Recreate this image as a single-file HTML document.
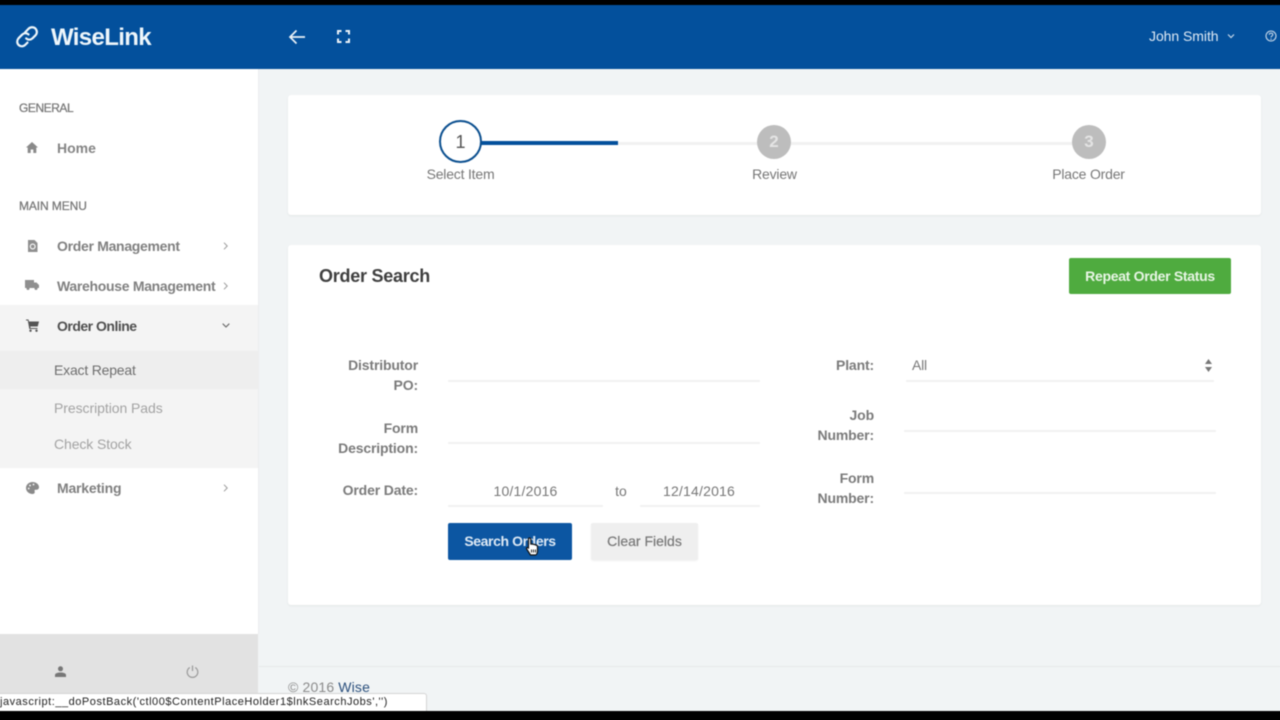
<!DOCTYPE html>
<html><head><meta charset="utf-8"><style>
html,body{margin:0;padding:0;width:1280px;height:720px;overflow:hidden;background:#f1f4f5;font-family:"Liberation Sans",sans-serif}
#o{position:relative;width:1280px;height:720px;overflow:hidden;contain:paint}
#w{position:absolute;left:0;top:0;width:1280px;height:720px;background:#f1f4f5;filter:blur(.4px)}
.a{position:absolute}
.t{position:absolute;white-space:nowrap;line-height:20px;font-size:14px;color:#777}
.r{text-align:right}
.c{text-align:center}
.m{font-size:14px;font-weight:700;color:#808080;letter-spacing:-.3px}
.l{position:absolute;height:2px;background:#f2f2f2}
.lab{font-weight:700;color:#7b7b7b;font-size:14px;letter-spacing:-.15px}
svg{position:absolute;overflow:visible}
</style></head><body><div id="o"><div id="w">
<div class="a" style="left:-6px;top:69px;width:264px;height:642px;background:#fff"></div>
<div class="a" style="left:258px;top:69px;width:1px;height:565px;background:#eceeef"></div>
<div class="a" style="left:-6px;top:-6px;width:1292px;height:11px;background:#000"></div>
<div class="a" style="left:-6px;top:5px;width:1292px;height:64px;background:#03509c"></div>

<svg style="left:15px;top:25px" width="24" height="24" viewBox="0 0 24 24" fill="none" stroke="#eef6fb" stroke-width="2.2" stroke-linecap="round"><path d="M10 7.500 L13.500 3.800 C15.500 1.800 18.500 1.800 20.500 3.600 C22.300 5.600 22.300 8.400 20.500 10.300 L17.500 13.300 C15.600 15 13 15 11.200 13.400"/><path d="M13.500 9.400 C11.500 7.800 9 7.900 7.200 9.600 L3.500 13.300 C1.800 15.300 1.800 18.200 3.600 20 C5.600 21.800 8.400 21.700 10.200 19.900 L12.500 17.600"/></svg>
<div class="t" style="left:51px;top:23px;line-height:30px;font-size:24px;font-weight:700;color:#eef6fb;letter-spacing:-.65px">WiseLink</div>
<svg style="left:288px;top:29px" width="18" height="16" viewBox="0 0 18 16" fill="none" stroke="#eaf1f7" stroke-width="1.7"><path d="M17 8H2M8.500 1.500L2 8l6.500 6.500"/></svg>
<svg style="left:337px;top:30px" width="13" height="13" viewBox="0 0 13 13" fill="none" stroke="#eaf1f7" stroke-width="2"><path d="M1 4.500V1H4.500M8.500 1H12V4.500M12 8.500V12H8.500M4.500 12H1V8.500"/></svg>
<div class="t" style="left:1149px;top:26px;color:#dfeaf5;letter-spacing:-.05px">John Smith</div>
<svg style="left:1227px;top:33px" width="8" height="6" viewBox="0 0 8 6" fill="none" stroke="#c8d9ea" stroke-width="1.200"><path d="M1 1.500L4 4.500L7 1.500"/></svg>
<svg style="left:1265px;top:30px" width="12" height="12" viewBox="0 0 12 12" fill="none" stroke="#c8d9ea" stroke-width="1.100"><circle cx="6" cy="6" r="5"/><path d="M4.300 4.700C4.300 2.600 7.800 2.600 7.800 4.700C7.800 6 6 5.900 6 7.500M6 8.500V9.700"/></svg>

<div class="t" style="left:19px;top:98px;font-size:12px;color:#777;letter-spacing:-.45px;-webkit-text-stroke:.25px #777">GENERAL</div>
<svg style="left:26px;top:142px" width="12" height="11" viewBox="0 0 12 11" fill="#8a8a8a"><path d="M6 0L12 5.500H10.300V11H7.300V7.500H4.700V11H1.700V5.500H0Z"/></svg>
<div class="t m" style="left:57px;top:138px;color:#858585;letter-spacing:0">Home</div>
<div class="t" style="left:19px;top:196px;font-size:12px;color:#777;letter-spacing:-.1px;-webkit-text-stroke:.25px #777">MAIN MENU</div>

<svg style="left:27px;top:240px" width="11" height="12" viewBox="0 0 11 12"><path d="M1 0H7.500L10.500 3V12H1Z" fill="#8f8f8f"/><circle cx="5.700" cy="6.500" r="2.400" fill="none" stroke="#fff" stroke-width="1.100"/></svg>
<div class="t m" style="left:57px;top:236px">Order Management</div>
<svg style="left:223px;top:242px" width="5" height="8" viewBox="0 0 5 8" fill="none" stroke="#9a9a9a" stroke-width="1"><path d="M1 .7L4.200 4L1 7.300"/></svg>

<svg style="left:25px;top:280px" width="14" height="10" viewBox="0 0 14 10" fill="#8f8f8f"><path d="M0 0H9V2.500H11.500L14 5V8H0Z"/><circle cx="3" cy="8.500" r="1.500"/><circle cx="11" cy="8.500" r="1.500"/></svg>
<div class="t m" style="left:57px;top:276px">Warehouse Management</div>
<svg style="left:223px;top:282px" width="5" height="8" viewBox="0 0 5 8" fill="none" stroke="#9a9a9a" stroke-width="1"><path d="M1 .7L4.200 4L1 7.300"/></svg>

<div class="a" style="left:-6px;top:305px;width:264px;height:163px;background:#f4f4f4"></div>
<div class="a" style="left:-6px;top:351px;width:264px;height:38px;background:#eeeeee"></div>
<svg style="left:26px;top:319px" width="13" height="13" viewBox="0 0 13 13" fill="#555"><path d="M0 .5H2.500L3 2.500H13L11.700 7.500H4.300L4.600 9H11.500V10H3.300L1.800 1.500H0Z"/><circle cx="4.500" cy="11.700" r="1.200"/><circle cx="10.500" cy="11.700" r="1.200"/></svg>
<div class="t m" style="left:57px;top:316px;color:#4f4f4f;letter-spacing:-.5px">Order Online</div>
<svg style="left:222px;top:323px" width="8" height="5" viewBox="0 0 8 5" fill="none" stroke="#666" stroke-width="1.100"><path d="M.7 .7L4 4L7.300 .7"/></svg>
<div class="t" style="left:54px;top:360px;color:#6e6e6e;letter-spacing:-.2px">Exact Repeat</div>
<div class="t" style="left:54px;top:398px;color:#a3a3a3;letter-spacing:-.06px">Prescription Pads</div>
<div class="t" style="left:54px;top:434px;color:#a3a3a3;letter-spacing:-.1px">Check Stock</div>

<svg style="left:26px;top:482px" width="13" height="12" viewBox="0 0 13 12"><path d="M6.500 0C10 0 13 2.300 13 5.200C13 7 11.500 7.800 9.800 7.800C8.500 7.800 8.300 8.700 8.700 9.500C9.100 10.600 8.300 12 6.500 12C3 12 0 9.300 0 6C0 2.700 3 0 6.500 0Z" fill="#8a8a8a"/><circle cx="4" cy="3.500" r=".9" fill="#fff"/><circle cx="7.500" cy="2.500" r=".9" fill="#fff"/><circle cx="2.700" cy="6.500" r=".9" fill="#fff"/></svg>
<div class="t m" style="left:57px;top:478px;letter-spacing:-.2px">Marketing</div>
<svg style="left:223px;top:484px" width="5" height="8" viewBox="0 0 5 8" fill="none" stroke="#9a9a9a" stroke-width="1"><path d="M1 .7L4.200 4L1 7.300"/></svg>

<div class="a" style="left:-6px;top:634px;width:264px;height:77px;background:#e2e2e2"></div>
<svg style="left:55px;top:666px" width="11" height="11" viewBox="0 0 11 11" fill="#777"><circle cx="5.500" cy="2.800" r="2.500"/><path d="M0 11V9C0 7.300 2.500 6.500 5.500 6.500C8.500 6.500 11 7.300 11 9V11Z"/></svg>
<svg style="left:186px;top:665px" width="13" height="13" viewBox="0 0 13 13" fill="none" stroke="#999" stroke-width="1.200"><path d="M3.800 2.500A5.300 5.300 0 1 0 9.200 2.500M6.500 .5V6"/></svg>

<div class="a" style="left:259px;top:666px;width:1027px;height:1px;background:#e6e8e9"></div>
<div class="t" style="left:288px;top:677px;font-size:14px;color:#8a8a8a;letter-spacing:.15px">© 2016 <span style="color:#2b4f7c">Wise</span></div>

<div class="a" style="left:288px;top:95px;width:973px;height:120px;background:#fff;border-radius:3px;box-shadow:0 1px 2px rgba(0,0,0,.06)"></div>
<div class="a" style="left:480px;top:142px;width:610px;height:3px;background:#f1f1f1"></div>
<div class="a" style="left:480px;top:141px;width:138px;height:4px;background:#03509c"></div>
<div class="a" style="left:439px;top:120px;width:39px;height:39px;border:2px solid #0b4f8f;border-radius:50%;background:#fff"></div>
<div class="t c" style="left:439px;top:132px;width:43px;font-size:18px;color:#555">1</div>
<div class="a" style="left:757px;top:125px;width:34px;height:34px;border-radius:50%;background:#bdbdbd"></div>
<div class="t c" style="left:757px;top:132px;width:34px;font-size:17px;font-weight:700;color:#e4e4e4">2</div>
<div class="a" style="left:1072px;top:125px;width:34px;height:34px;border-radius:50%;background:#bdbdbd"></div>
<div class="t c" style="left:1072px;top:132px;width:34px;font-size:17px;font-weight:700;color:#e4e4e4">3</div>
<div class="t c" style="left:400px;top:164px;width:121px;color:#777;letter-spacing:-.2px">Select Item</div>
<div class="t c" style="left:714px;top:164px;width:121px;color:#777;letter-spacing:-.2px">Review</div>
<div class="t c" style="left:1028px;top:164px;width:121px;color:#777;letter-spacing:-.2px">Place Order</div>

<div class="a" style="left:288px;top:245px;width:973px;height:360px;background:#fff;border-radius:3px;box-shadow:0 1px 2px rgba(0,0,0,.06)"></div>
<div class="t" style="left:319px;top:266px;font-size:18px;font-weight:700;color:#3f3f3f;letter-spacing:-.25px">Order Search</div>
<div class="a" style="left:1069px;top:258px;width:162px;height:36px;background:#4fab3f;border-radius:2px"></div>
<div class="t c" style="left:1069px;top:266px;width:162px;font-weight:700;color:#e9f6e6;letter-spacing:-.3px">Repeat Order Status</div>

<div class="t r lab" style="left:318px;top:355px;width:100px">Distributor</div>
<div class="t r lab" style="left:318px;top:375px;width:100px">PO:</div>
<div class="t r lab" style="left:318px;top:418px;width:100px">Form</div>
<div class="t r lab" style="left:318px;top:438px;width:100px">Description:</div>
<div class="t r lab" style="left:318px;top:480px;width:100px">Order Date:</div>
<div class="l" style="left:448px;top:380px;width:312px"></div>
<div class="l" style="left:448px;top:442px;width:312px"></div>
<div class="l" style="left:448px;top:505px;width:155px"></div>
<div class="l" style="left:640px;top:505px;width:120px"></div>
<div class="t c" style="left:448px;top:481px;width:155px;color:#777;letter-spacing:.2px">10/1/2016</div>
<div class="t c" style="left:605px;top:481px;width:32px;color:#777">to</div>
<div class="t c" style="left:639px;top:481px;width:120px;color:#777;letter-spacing:.2px">12/14/2016</div>

<div class="t r lab" style="left:774px;top:355px;width:100px">Plant:</div>
<div class="t" style="left:912px;top:355px;color:#777;letter-spacing:-.2px">All</div>
<svg style="left:1205px;top:359px" width="7" height="13" viewBox="0 0 7 13" fill="#777"><path d="M3.500 0L7 5H0ZM0 8H7L3.500 13Z"/></svg>
<div class="l" style="left:906px;top:380px;width:308px"></div>
<div class="t r lab" style="left:774px;top:405px;width:100px">Job</div>
<div class="t r lab" style="left:774px;top:425px;width:100px">Number:</div>
<div class="l" style="left:904px;top:430px;width:312px"></div>
<div class="t r lab" style="left:774px;top:468px;width:100px">Form</div>
<div class="t r lab" style="left:774px;top:488px;width:100px">Number:</div>
<div class="l" style="left:904px;top:492px;width:312px"></div>

<div class="a" style="left:448px;top:523px;width:124px;height:37px;background:#0c56a2;border-radius:2px"></div>
<div class="t c" style="left:448px;top:531px;width:124px;font-weight:700;color:#dfeaf5;letter-spacing:-.4px">Search Orders</div>
<div class="a" style="left:591px;top:523px;width:107px;height:37px;background:#efefef;border-radius:2px;box-shadow:0 1px 2px rgba(0,0,0,.06)"></div>
<div class="t c" style="left:591px;top:531px;width:107px;color:#777;-webkit-text-stroke:.2px #777">Clear Fields</div>
<svg style="left:525px;top:537px" width="14" height="19" viewBox="0 0 14 19"><path d="M3.500 1.500C4.500 .5 5.800 1 5.800 2.500V7C8 7 12.500 7.800 12.500 9.500V14C12.500 16 11.500 18 10.500 18H5.500L2 12.500C1 11 1.800 10 3.500 11Z" fill="#fff" stroke="#111" stroke-width="1.200"/><path d="M6.500 12.500V15.500M8.500 12.500V15.500M10.500 12.500V15.500" stroke="#111" stroke-width=".9"/></svg>

<div class="a" style="left:-6px;top:693px;width:431px;height:17px;background:#fff;border:1px solid #d4d4d4;border-radius:0 3px 0 0;border-bottom:0"></div>
<div class="t" style="left:0;top:692px;font-size:11px;color:#222;letter-spacing:.53px">javascript:__doPostBack('ctl00$ContentPlaceHolder1$lnkSearchJobs','')</div>
<div class="a" style="left:-6px;top:711px;width:1292px;height:15px;background:#000"></div>
</div></div></body></html>
